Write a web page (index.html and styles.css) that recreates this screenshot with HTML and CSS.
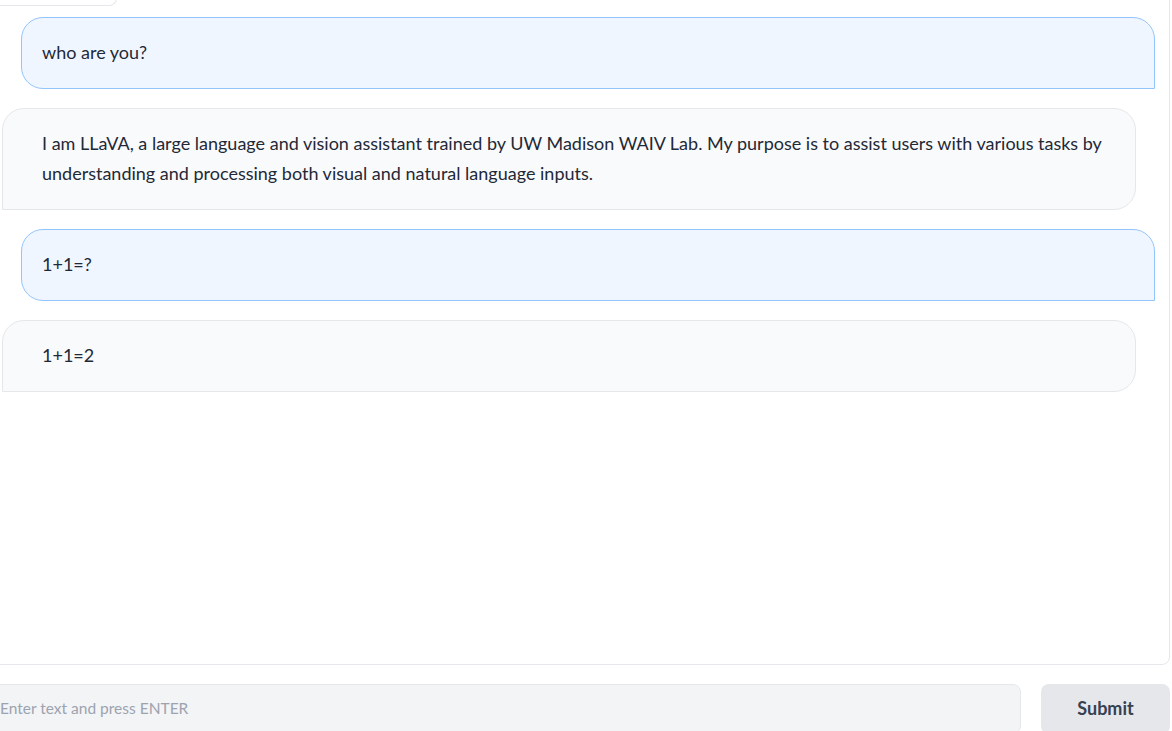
FILE: index.html
```html
<!DOCTYPE html>
<html lang="en">
<head>
  <meta charset="UTF-8">
  <title>LLaVA Chat</title>
  <link rel="stylesheet" href="styles.css">
</head>
<body>
  <div class="app">
    <div class="chatbot">
      <span class="block-label"></span>
      <div class="messages">
        <div class="message user">who are you?</div>
        <div class="message bot">I am LLaVA, a large language and vision assistant trained by UW Madison WAIV Lab. My purpose is to assist users with various tasks by understanding and processing both visual and natural language inputs.</div>
        <div class="message user">1+1=?</div>
        <div class="message bot">1+1=2</div>
      </div>
    </div>

    <div class="input-row">
      <textarea class="prompt" rows="1" placeholder="Enter text and press ENTER"></textarea>
      <button class="submit-btn">Submit</button>
    </div>
  </div>
</body>
</html>
```

FILE: styles.css
```css
* {
  margin: 0;
  padding: 0;
  box-sizing: border-box;
}

html, body {
  width: 1172px;
  height: 731px;
  background-color: #ffffff;
  font-family: Lato, "Noto Sans", sans-serif;
  color: #1f2937;
  overflow: hidden;
}

.app {
  width: 1180px;
  margin-left: -10px;
  margin-top: -20px;
}

.chatbot {
  position: relative;
  height: 685px;
  border: 1px solid #e5e7eb;
  border-radius: 8px;
  padding: 36px 14px 0 11px;
}

/* block label, scrolled off the top: only its lower edge shows */
.block-label {
  position: absolute;
  top: -1px;
  left: -1px;
  width: 127px;
  height: 26px;
  border: 1px solid #e5e7eb;
  border-top: none;
  border-left: none;
  border-radius: 0 0 8px 0;
  background: #ffffff;
}

.messages {
  display: flex;
  flex-direction: column;
  gap: 19px;
}

.message {
  width: calc(100% - 19px);
  padding: 19px 20px 21px;
  font-size: 18px;
  line-height: 30px;
  border: 1px solid;
  border-radius: 22px;
}

.message.user {
  align-self: flex-end;
  background-color: #eff6ff;
  border-color: #93c5fd;
  border-bottom-right-radius: 0;
}

.message.bot {
  align-self: flex-start;
  padding-left: 39px;
  background-color: #f9fafb;
  border-color: #e5e7eb;
  border-bottom-left-radius: 0;
}

.input-row {
  display: flex;
  gap: 20px;
  margin-top: 19px;
}

.prompt {
  flex: 1;
  height: 50px;
  padding: 11px 9px;
  font-family: inherit;
  font-size: 15.5px;
  line-height: 24px;
  color: #1f2937;
  background-color: #f3f4f6;
  border: 1px solid #e5e7eb;
  border-radius: 8px;
  resize: none;
  outline: none;
}

.prompt::placeholder {
  color: #9ca3af;
}

.submit-btn {
  width: 129px;
  height: 50px;
  padding-bottom: 2px;
  font-family: inherit;
  font-size: 18px;
  font-weight: 700;
  color: #374151;
  background-color: #e5e7eb;
  border: none;
  border-radius: 8px;
  cursor: pointer;
}
```
